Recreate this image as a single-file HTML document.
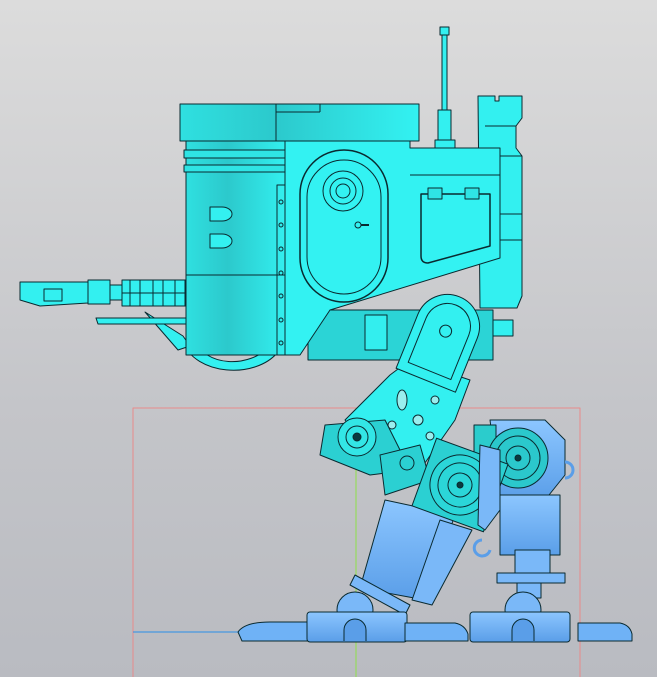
<!DOCTYPE html>
<html><head><meta charset="utf-8"><style>
html,body{margin:0;padding:0;width:657px;height:677px;overflow:hidden}
body{background:linear-gradient(#dcdcdc,#c4c5c9 60%,#b9bbc1)}
svg{position:absolute;left:0;top:0}
</style></head><body>
<svg width="657" height="677" viewBox="0 0 657 677" xmlns="http://www.w3.org/2000/svg">
<defs>
<linearGradient id="cy" x1="0" x2="1"><stop offset="0" stop-color="#2fe0e0"/><stop offset="0.4" stop-color="#2cc9cc"/><stop offset="1" stop-color="#33f2f2"/></linearGradient>
<linearGradient id="bl" x1="0" x2="0" y1="0" y2="1"><stop offset="0" stop-color="#8cc6ff"/><stop offset="1" stop-color="#5a9ee8"/></linearGradient>
</defs>
<g stroke="#0a2a30" stroke-width="1" stroke-linejoin="round">
<rect x="133" y="408" width="447" height="280" fill="none" stroke="#e88a8a" stroke-width="1"/>
<line x1="356" y1="408" x2="356" y2="677" stroke="#8ee04a"/>
<line x1="133" y1="632" x2="356" y2="632" stroke="#2a8ee8"/>
<!-- antenna -->
<rect x="440" y="27" width="9" height="8" fill="#33f0f0"/>
<rect x="442" y="35" width="5" height="80" fill="#33f0f0"/>
<rect x="438" y="110" width="13" height="30" fill="#33f0f0"/>
<rect x="435" y="140" width="20" height="20" fill="#33f0f0"/>
<!-- right tower -->
<path d="M478 96h17v5h4v-5h23v22l-6 8v22l6 8v140l-5 12h-37z" fill="#33f0f0"/>
<path d="M485 126 H516 M480 156 H522 M492 214 H522 M492 240 H522" fill="none"/>
<!-- under block -->
<rect x="308" y="310" width="185" height="50" fill="#2bd4d6"/>
<rect x="493" y="320" width="20" height="16" fill="#33f0f0"/>
<rect x="365" y="315" width="22" height="35" fill="#33eeee"/>
<!-- hose -->
<path d="M183 342 C195 375 255 380 278 352 L270 346 C250 368 205 368 193 338z" fill="#33f0f0"/>
<path d="M145 312 L183 336 L190 346 L178 350 Z" fill="#33f0f0"/>
<!-- gun -->
<path d="M20 282 L88 282 L88 303 L40 306 L20 300 Z" fill="#33f0f0"/>
<rect x="88" y="280" width="22" height="24" fill="#33f0f0"/>
<rect x="110" y="285" width="12" height="15" fill="#33f0f0"/>
<rect x="122" y="280" width="70" height="26" fill="#33f0f0"/>
<g fill="none"><path d="M130 280v26M140 280v26M153 280v26M163 280v26M175 280v26M185 280v26M122 293h70"/></g>
<rect x="44" y="289" width="18" height="12" fill="#33f0f0"/>
<path d="M96 318 L200 318 L200 324 L98 324 Z" fill="#33f0f0"/>
<!-- left cylinder -->
<path d="M186 141 H290 V355 H186 Z" fill="url(#cy)"/>
<line x1="186" y1="275" x2="290" y2="275"/>
<path d="M210 207h12a10 7 0 0 1 0 14h-12z M210 234h12a10 7 0 0 1 0 14h-12z" fill="#33f0f0"/>
<path d="M184 150 H285 V158 H184z M184 165 H285 V172 H184z" fill="#2fe4e4"/>
<!-- body -->
<path d="M285 141 H410 V148 H500 V258 L330 310 L300 355 H285 Z" fill="#33f2f2"/>
<line x1="410" y1="175" x2="500" y2="175"/>
<rect x="277" y="185" width="8" height="170" fill="none"/>
<g fill="none"><circle cx="281" cy="202" r="2"/><circle cx="281" cy="225" r="2"/><circle cx="281" cy="249" r="2"/><circle cx="281" cy="273" r="2"/><circle cx="281" cy="296" r="2"/><circle cx="281" cy="320" r="2"/><circle cx="281" cy="343" r="2"/></g>
<rect x="300" y="150" width="88" height="152" rx="44" fill="#33f2f2" stroke-width="1.5"/>
<rect x="307" y="160" width="74" height="134" rx="37" fill="none"/>
<circle cx="343" cy="191" r="20" fill="#33f2f2"/>
<circle cx="343" cy="191" r="13" fill="none"/><circle cx="343" cy="191" r="7" fill="none"/>
<circle cx="358" cy="225" r="3" fill="none"/><line x1="361" y1="225" x2="369" y2="225" stroke-width="2"/>
<path d="M421 194 H490 V246 L428 263 Q421 263 421 256 Z" fill="#33f2f2" stroke-width="1.5"/>
<rect x="428" y="188" width="14" height="11" fill="#2fe4e4"/><rect x="465" y="188" width="14" height="11" fill="#2fe4e4"/>
<!-- top box -->
<path d="M180 104 H419 V141 H180 Z" fill="url(#cy)"/>
<path d="M276 104 V141 M276 112 H320 M320 104 V112"/>
<!-- thigh frame -->
<path d="M410 360 L470 380 L455 420 L420 470 L360 440 L345 420 L390 375 Z" fill="#33f0f0"/>
<g fill="#9ee"><ellipse cx="402" cy="400" rx="5" ry="10"/><circle cx="418" cy="420" r="5"/><circle cx="435" cy="400" r="4"/><circle cx="430" cy="436" r="4"/><circle cx="392" cy="425" r="4"/></g>
<!-- hip plate -->
<g transform="translate(440 345) rotate(22)">
<path d="M-32 -5 V-20 A32 32 0 0 1 32 -20 V38 H-32 Z" fill="#33f0f0"/>
<path d="M-23 -8 V-20 A23 23 0 0 1 23 -20 V28 H-23 Z" fill="none"/>
<circle cx="0" cy="-15" r="6" fill="none"/>
</g>
<!-- cyan knee -->
<path d="M325 425 L385 420 L410 470 L370 475 L320 455 Z" fill="#2bd0d2"/>
<circle cx="357" cy="437" r="19" fill="#33e6e6"/><circle cx="357" cy="437" r="11" fill="none"/><circle cx="357" cy="437" r="4" fill="#0a3a40"/>
<path d="M380 455 L420 445 L430 480 L385 495 Z" fill="#2bd0d2"/>
<circle cx="407" cy="463" r="7" fill="#2bd0d2"/>
<!-- blue rear upper -->
<path d="M490 420 H545 L565 440 V475 L545 500 H500 Z" fill="url(#bl)"/>
<rect x="474" y="425" width="22" height="70" fill="#2bcccc"/>
<circle cx="518" cy="458" r="30" fill="#2bc8cc"/><circle cx="518" cy="458" r="22" fill="none"/><circle cx="518" cy="458" r="12" fill="none"/><circle cx="518" cy="458" r="3" fill="#0a3a40"/>
<path d="M565 462 a8 8 0 1 1 0 16" fill="none" stroke-width="3" stroke="#5a9ee8"/>
<!-- blue rear shin -->
<rect x="500" y="495" width="60" height="60" fill="url(#bl)"/>
<rect x="515" y="550" width="35" height="25" fill="#7ab8f8"/>
<rect x="497" y="573" width="68" height="10" fill="#7ab8f8"/>
<rect x="517" y="583" width="24" height="15" fill="#7ab8f8"/>
<!-- front shin -->
<path d="M385 500 L455 515 L425 600 L360 588 Z" fill="url(#bl)"/>
<path d="M355 575 L410 605 L405 615 L350 585 Z" fill="#7ab8f8"/>
<path d="M440 520 L472 530 L432 605 L412 600 Z" fill="#7ab8f8"/>
<!-- cyan knee box 2 -->
<g transform="translate(460 485) rotate(20)">
<rect x="-38" y="-36" width="76" height="72" fill="#2bd0d2"/>
<circle cx="0" cy="0" r="30" fill="#2bd6d8"/><circle cx="0" cy="0" r="22" fill="none"/><circle cx="0" cy="0" r="12" fill="none"/><circle cx="0" cy="0" r="3" fill="#0a3a40"/>
</g>
<path d="M480 445 L500 450 L500 510 L485 530 L478 525 Z" fill="#7ab8f8"/>
<path d="M482 540 a8 8 0 1 0 8 10" fill="none" stroke-width="3" stroke="#5a9ee8"/>
<!-- feet -->
<circle cx="355" cy="610" r="18" fill="#7ab8f8"/>
<circle cx="523" cy="610" r="18" fill="#7ab8f8"/>
<path d="M238 632 Q245 622 270 622 H310 V641 H242 Z" fill="#6fb2f6"/>
<rect x="307" y="612" width="100" height="30" rx="3" fill="url(#bl)"/>
<path d="M405 623 H455 Q465 625 468 634 V641 H405 Z" fill="#6fb2f6"/>
<rect x="470" y="612" width="100" height="30" rx="3" fill="url(#bl)"/>
<path d="M578 623 H620 Q630 625 632 634 V641 H578 Z" fill="#6fb2f6"/>
<path d="M344 641 V630 a11 11 0 0 1 22 0 V641 M512 641 V630 a11 11 0 0 1 22 0 V641" fill="#5a9ee8"/>
</g>
</svg>
</body></html>
